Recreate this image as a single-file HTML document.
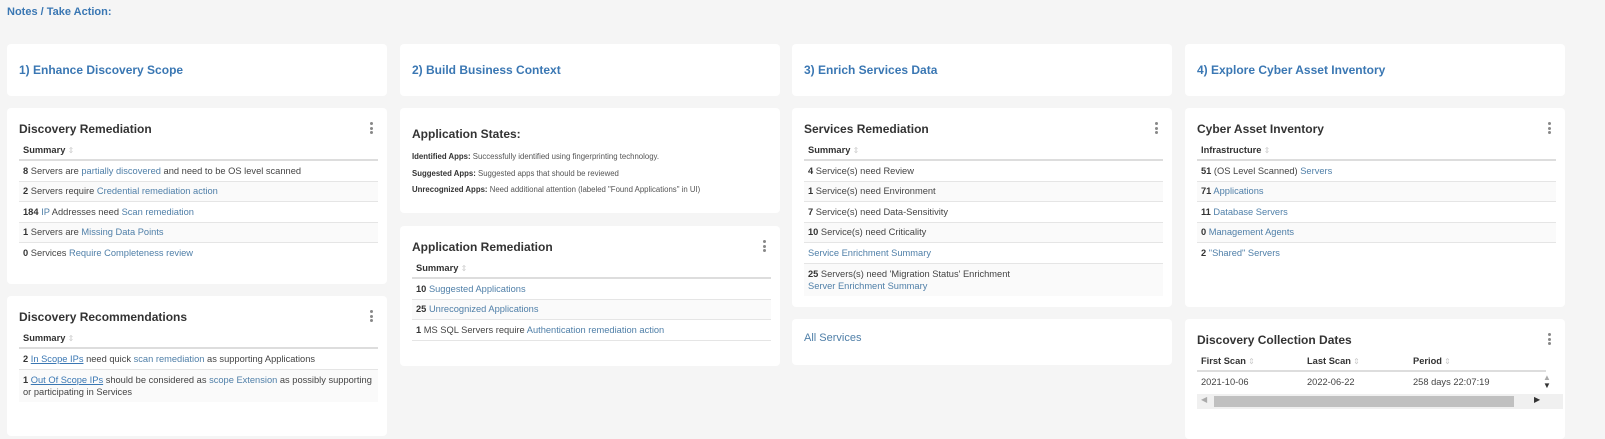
<!DOCTYPE html><html><head><style>
body{margin:0;width:1605px;height:432px;background:#f5f5f5;font-family:"Liberation Sans",sans-serif;position:relative;overflow:hidden;color:#333}
.c{position:absolute;background:#fff;border-radius:4px;width:380px}
.top{height:52px;top:44px}
.top span{position:absolute;left:12px;top:19px;font-size:12px;font-weight:bold;color:#3a77b3}
h3{position:absolute;left:12px;top:14px;margin:0;font-size:12px;font-weight:bold;color:#333}
.dots{position:absolute;right:14px;top:14px;width:3px}
.dots i{display:block;width:3px;height:3px;border-radius:2px;background:#888;margin-bottom:1.5px}
table{position:absolute;left:12px;top:34px;width:359px;border-collapse:collapse;font-size:9.3px}
th{text-align:left;font-weight:bold;padding:3px 4px 4px;height:10px;border-bottom:2px solid #ddd;color:#333}
th:after{content:" \21D5";color:#ccc;font-weight:normal;font-size:8px}
td{padding:0 4px;height:19.5px;border-bottom:1px solid #e5e5e5;color:#444;line-height:12px}
tr:nth-child(odd) td{background:#fafafa}
a{color:#4f7fa8;text-decoration:none}
a.u{text-decoration:underline;color:#3a77b3}
b{color:#333}
</style></head><body>
<div style="position:absolute;left:7px;top:6px;font-size:11px;font-weight:bold;color:#3a77b3">Notes / Take Action:</div>

<div class="c top" style="left:7px"><span>1) Enhance Discovery Scope</span></div>
<div class="c top" style="left:400px"><span>2) Build Business Context</span></div>
<div class="c top" style="left:792px"><span>3) Enrich Services Data</span></div>
<div class="c top" style="left:1185px"><span>4) Explore Cyber Asset Inventory</span></div>

<div class="c" style="left:7px;top:108px;height:176px"><h3>Discovery Remediation</h3><div class="dots"><i></i><i></i><i></i></div>
<table><tr><th>Summary</th></tr>
<tr><td><b>8</b> Servers are <a>partially discovered</a> and need to be OS level scanned</td></tr>
<tr><td><b>2</b> Servers require <a>Credential remediation action</a></td></tr>
<tr><td><b>184</b> <a>IP</a> Addresses need <a>Scan remediation</a></td></tr>
<tr><td><b>1</b> Servers are <a>Missing Data Points</a></td></tr>
<tr><td style="border:0"><b>0</b> Services <a>Require Completeness review</a></td></tr></table></div>

<div class="c" style="left:7px;top:296px;height:140px"><h3>Discovery Recommendations</h3><div class="dots"><i></i><i></i><i></i></div>
<table><tr><th>Summary</th></tr>
<tr><td><b>2</b> <a class="u">In Scope IPs</a> need quick <a>scan remediation</a> as supporting Applications</td></tr>
<tr><td style="height:32px;border:0"><b>1</b> <a class="u">Out Of Scope IPs</a> should be considered as <a>scope Extension</a> as possibly supporting or participating in Services</td></tr></table></div>

<div class="c" style="left:400px;top:108px;height:105px"><h3 style="top:19px">Application States:</h3>
<div style="position:absolute;left:12px;top:41px;font-size:7.8px;color:#555;line-height:16.5px"><b>Identified Apps:</b> Successfully identified using fingerprinting technology.<br><b>Suggested Apps:</b> Suggested apps that should be reviewed<br><b>Unrecognized Apps:</b> Need additional attention (labeled "Found Applications" in UI)</div></div>

<div class="c" style="left:400px;top:226px;height:140px"><h3>Application Remediation</h3><div class="dots"><i></i><i></i><i></i></div>
<table><tr><th>Summary</th></tr>
<tr><td><b>10</b> <a>Suggested Applications</a></td></tr>
<tr><td><b>25</b> <a>Unrecognized Applications</a></td></tr>
<tr><td><b>1</b> MS SQL Servers require <a>Authentication remediation action</a></td></tr></table></div>

<div class="c" style="left:792px;top:108px;height:199px"><h3>Services Remediation</h3><div class="dots"><i></i><i></i><i></i></div>
<table><tr><th>Summary</th></tr>
<tr><td><b>4</b> Service(s) need Review</td></tr>
<tr><td><b>1</b> Service(s) need Environment</td></tr>
<tr><td><b>7</b> Service(s) need Data-Sensitivity</td></tr>
<tr><td><b>10</b> Service(s) need Criticality</td></tr>
<tr><td><a>Service Enrichment Summary</a></td></tr>
<tr><td style="height:32px;border:0"><b>25</b> Servers(s) need 'Migration Status' Enrichment<br><a>Server Enrichment Summary</a></td></tr></table></div>

<div class="c" style="left:792px;top:319px;height:46px"><a style="position:absolute;left:12px;top:13px;font-size:11px">All Services</a></div>

<div class="c" style="left:1185px;top:108px;height:199px"><h3>Cyber Asset Inventory</h3><div class="dots"><i></i><i></i><i></i></div>
<table><tr><th>Infrastructure</th></tr>
<tr><td><b>51</b> (OS Level Scanned) <a>Servers</a></td></tr>
<tr><td><b>71</b> <a>Applications</a></td></tr>
<tr><td><b>11</b> <a>Database Servers</a></td></tr>
<tr><td><b>0</b> <a>Management Agents</a></td></tr>
<tr><td style="border:0"><b>2</b> <a>"Shared" Servers</a></td></tr></table></div>

<div class="c" style="left:1185px;top:319px;height:120px"><h3 style="top:14px">Discovery Collection Dates</h3><div class="dots"><i></i><i></i><i></i></div>
<table style="width:349px"><tr><th style="width:98px">First Scan</th><th style="width:98px">Last Scan</th><th>Period</th></tr>
<tr><td style="border:0">2021-10-06</td><td style="border:0">2022-06-22</td><td style="border:0">258 days 22:07:19</td></tr></table>
<div style="position:absolute;left:12px;top:75px;width:366px;height:15px;background:#f0f0f0"><div style="position:absolute;left:17px;top:2px;width:300px;height:11px;background:#c0c0c0"></div><span style="position:absolute;left:4px;top:1px;font-size:8px;color:#aaa">◀</span><span style="position:absolute;left:337px;top:1px;font-size:8px;color:#333">▶</span></div>
<span style="position:absolute;left:358px;top:55px;font-size:8px;color:#aaa;line-height:8px">▲<br><span style="color:#333">▼</span></span></div>
</body></html>
